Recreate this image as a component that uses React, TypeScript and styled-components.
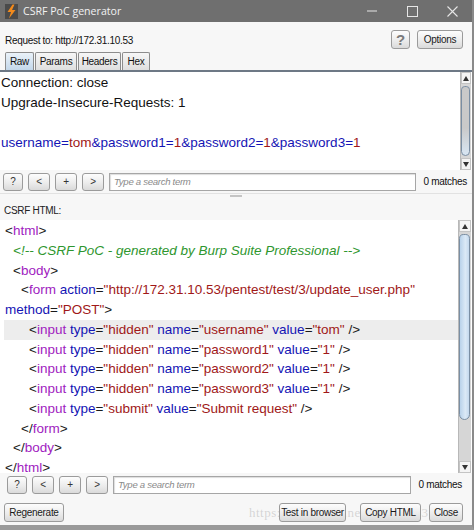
import React from 'react';
import styled, { createGlobalStyle } from 'styled-components';

const GlobalStyle = createGlobalStyle`
  html, body {
    margin: 0;
    padding: 0;
    background: #6f6f6f;
  }
  body {
    font-family: "Liberation Sans", Arial, sans-serif;
  }
`;

const Window = styled.div`
  position: relative;
  width: 474px;
  height: 530px;
  display: flex;
  flex-direction: column;
  background: #f7f7f7;
  border-right: 2px solid #8a8a8a;
  border-bottom: 5px solid #9a9a9a;
  box-sizing: border-box;
  overflow: hidden;
`;

const TitleBar = styled.div`
  height: 22px;
  flex: none;
  display: flex;
  align-items: center;
  background: #6f6f6f;
  color: #f2f2f2;
  font-family: "Open Sans", "Noto Sans", sans-serif;
  font-size: 10.6px;
  padding-left: 5px;
`;

const TitleText = styled.span`
  margin-left: 5px;
  flex: 1;
`;

const WinControls = styled.div`
  display: flex;
  align-items: center;
  height: 22px;
`;

const WinButton = styled.div<{ $w: number }>`
  width: ${({ $w }) => $w}px;
  height: 22px;
  display: flex;
  align-items: center;
  justify-content: center;
`;

const uiFont = `
  font-family: "Liberation Sans", Arial, sans-serif;
  font-size: 10px;
  letter-spacing: -0.3px;
`;

const HeaderRow = styled.div`
  height: 30px;
  flex: none;
  display: flex;
  align-items: center;
  padding: 0 9px 0 5px;
  ${uiFont}
  color: #111;
`;

const HeaderLabel = styled.span`
  flex: 1;
  padding-top: 7px;
`;

const Button = styled.button<{ $w?: number; $h?: number }>`
  position: relative;
  height: ${({ $h }) => $h ?? 19}px;
  ${({ $w }) => ($w ? `width: ${$w}px;` : '')}
  padding: 0 3px;
  border: 1px solid #9b9b9b;
  border-radius: 3px;
  background: linear-gradient(#fdfdfd, #ececec 55%, #dadada);
  ${uiFont}
  color: #1a1a1a;
  display: flex;
  align-items: center;
  justify-content: center;
  box-sizing: border-box;
  flex: none;
  white-space: nowrap;
`;

const HelpButton = styled(Button)`
  font-size: 15px;
  color: #7a7a7a;
  font-weight: bold;
  padding: 0;
`;

const HeaderButtons = styled.div`
  display: flex;
  gap: 7px;
  align-self: flex-start;
  margin-top: 8px;
`;

const Tabs = styled.div`
  height: 18px;
  flex: none;
  display: flex;
  align-items: flex-end;
  padding-left: 5px;
  gap: 1px;
  border-bottom: 2px solid #6d7885;
`;

const Tab = styled.div<{ $active?: boolean; $w: number }>`
  width: ${({ $w }) => $w}px;
  height: 18px;
  box-sizing: border-box;
  border: 1px solid #8c8c8c;
  border-bottom: none;
  border-radius: 2px 2px 0 0;
  background: ${({ $active }) =>
    $active ? 'linear-gradient(#eaf2f9, #c3d7ea)' : 'linear-gradient(#f7f7f7, #dedede)'};
  ${uiFont}
  color: #111;
  display: flex;
  align-items: center;
  justify-content: center;
`;

const EditorFrame = styled.div<{ $h: number }>`
  height: ${({ $h }) => $h}px;
  flex: none;
  display: flex;
  background: #fff;
  box-sizing: border-box;
  overflow: hidden;
`;

const EditorText = styled.div<{ $lh: number; $pad: number; $top: number }>`
  flex: 1;
  font-size: 13.5px;
  line-height: ${({ $lh }) => $lh}px;
  padding: ${({ $top }) => $top}px 0 0 ${({ $pad }) => $pad}px;
  white-space: pre;
  color: #111;
  overflow: hidden;
`;

const Line = styled.div<{ $hl?: boolean; $indent?: number }>`
  padding-left: ${({ $indent }) => ($indent ?? 0) * 8 + 1}px;
  background: ${({ $hl }) => ($hl ? '#ededed' : 'transparent')};
`;

const Bracket = styled.span`
  color: #1a1a1a;
`;
const TagName = styled.span`
  color: #a01cc0;
`;
const AttrName = styled.span`
  color: #1414b4;
`;
const AttrValue = styled.span`
  color: #a01818;
`;
const Comment = styled.span`
  color: #2e962e;
  font-style: italic;
`;

const ScrollBar = styled.div<{ $w: number }>`
  width: ${({ $w }) => $w}px;
  flex: none;
  display: flex;
  flex-direction: column;
  background: #d6d6d6;
  border-left: 1px solid #b8b8b8;
  margin-right: 1px;
`;

const ScrollArrow = styled.div`
  height: 12px;
  flex: none;
  background: #f4f4f4;
  border: 1px solid #c4c4c4;
  box-sizing: border-box;
  display: flex;
  align-items: center;
  justify-content: center;
`;

const ScrollThumb = styled.div<{ $h: number; $color: string }>`
  height: ${({ $h }) => $h}px;
  flex: none;
  margin: 2px 1px 0 0;
  border-radius: 10px 10px 12px 12px;
  background: ${({ $color }) => $color};
  border: 1px solid #7a8ea3;
  box-sizing: border-box;
`;

const ScrollTrack = styled.div`
  flex: 1;
`;

const SearchRow = styled.div<{ $pl: number; $pr: number }>`
  height: 23px;
  flex: none;
  display: flex;
  align-items: center;
  padding: 0 ${({ $pr }) => $pr}px 0 ${({ $pl }) => $pl}px;
  gap: 5px;
`;

const SmallButton = styled(Button)`
  width: 22px;
  height: 18px;
  padding: 0;
  font-size: 10px;
  color: #333;
`;

const SearchInput = styled.div`
  flex: 1;
  height: 18px;
  box-sizing: border-box;
  border: 1px solid #a6a6a6;
  box-shadow: inset 1px 1px 1px #ddd;
  background: #fff;
  ${uiFont}
  font-size: 9.6px;
  font-style: italic;
  color: #8a8a8a;
  padding-left: 4px;
  display: flex;
  align-items: center;
`;

const Matches = styled.span`
  ${uiFont}
  color: #111;
  margin-left: 3px;
  white-space: nowrap;
`;

const Splitter = styled.div`
  height: 7px;
  flex: none;
  display: flex;
  justify-content: center;
  align-items: center;
  border-top: 1px solid #e2e2e2;
`;

const SplitHandle = styled.div`
  width: 12px;
  height: 2px;
  background: #c4c4c4;
  margin-top: -4px;
`;

const SectionLabel = styled.div`
  height: 19px;
  flex: none;
  ${uiFont}
  color: #222;
  padding-left: 4px;
  display: flex;
  align-items: center;
`;

const BottomBar = styled.div`
  flex: 1;
  display: flex;
  align-items: center;
  padding: 3px 9px 0 4px;
`;

const BottomRight = styled.div`
  margin-left: auto;
  display: flex;
  align-items: center;
`;

const Watermark = styled.span`
  position: absolute;
  left: 249px;
  top: 505px;
  font-family: "Liberation Serif", serif;
  font-size: 13px;
  color: rgba(170, 170, 170, 0.45);
  letter-spacing: 0.5px;
  pointer-events: none;
  white-space: nowrap;
`;

const UpArrow = () => (
  <svg width="6" height="5" viewBox="0 0 6 5">
    <path d="M0 5 L3 0 L6 5 Z" fill="#333" />
  </svg>
);

const DownArrow = () => (
  <svg width="6" height="5" viewBox="0 0 6 5">
    <path d="M0 0 L3 5 L6 0 Z" fill="#333" />
  </svg>
);

const BurpIcon = () => (
  <svg width="13" height="15" viewBox="0 0 13 15">
    <rect x="0" y="0" width="13" height="15" fill="#4a4a4a" />
    <path d="M7.5 0.5 L2.5 8 L6 8 L4 14.5 L10.5 6 L7 6 L9.5 0.5 Z" fill="#f28a1c" />
  </svg>
);

const Tag: React.FC<{ close?: boolean; name: string; children?: React.ReactNode }> = ({
  close,
  name,
  children,
}) => (
  <>
    <Bracket>{close ? '</' : '<'}</Bracket>
    <TagName>{name}</TagName>
    {children}
    <Bracket>{children && !close ? ' />' : '>'}</Bracket>
  </>
);

const Attr: React.FC<{ name: string; value: string }> = ({ name, value }) => (
  <>
    {' '}
    <AttrName>{name}</AttrName>
    <Bracket>=</Bracket>
    <AttrValue>"{value}"</AttrValue>
  </>
);

const hiddenInputs = [
  ['username', 'tom'],
  ['password1', '1'],
  ['password2', '1'],
  ['password3', '1'],
];

const Search: React.FC<{ pl: number; pr: number }> = ({ pl, pr }) => (
  <SearchRow $pl={pl} $pr={pr}>
    <SmallButton style={{ width: 20 }}>?</SmallButton>
    <SmallButton>&lt;</SmallButton>
    <SmallButton>+</SmallButton>
    <SmallButton>&gt;</SmallButton>
    <SearchInput>Type a search term</SearchInput>
    <Matches>0 matches</Matches>
  </SearchRow>
);

const App: React.FC = () => {
  return (
    <>
      <GlobalStyle />
      <Window>
        <TitleBar>
          <BurpIcon />
          <TitleText>CSRF PoC generator</TitleText>
          <WinControls>
            <WinButton $w={40}>
              <svg width="10" height="2">
                <rect width="10" height="1" y="0.5" fill="#e6e6e6" />
              </svg>
            </WinButton>
            <WinButton $w={40}>
              <svg width="11" height="11">
                <rect x="0.5" y="0.5" width="10" height="10" fill="none" stroke="#e6e6e6" />
              </svg>
            </WinButton>
            <WinButton $w={40}>
              <svg width="11" height="11">
                <path d="M0.5 0.5 L10.5 10.5 M10.5 0.5 L0.5 10.5" stroke="#e6e6e6" strokeWidth="1.1" />
              </svg>
            </WinButton>
          </WinControls>
        </TitleBar>

        <HeaderRow>
          <HeaderLabel>Request to: http://172.31.10.53</HeaderLabel>
          <HeaderButtons>
            <HelpButton $w={19}>?</HelpButton>
            <Button $w={46}>Options</Button>
          </HeaderButtons>
        </HeaderRow>

        <Tabs>
          <Tab $active $w={29}>Raw</Tab>
          <Tab $w={42}>Params</Tab>
          <Tab $w={43}>Headers</Tab>
          <Tab $w={28}>Hex</Tab>
        </Tabs>

        <EditorFrame $h={98}>
          <EditorText $lh={20} $pad={0} $top={1}>
            <Line>Connection: close</Line>
            <Line>Upgrade-Insecure-Requests: 1</Line>
            <Line> </Line>
            <Line>
              <AttrName>username=</AttrName>
              <AttrValue>tom</AttrValue>
              <AttrName>&amp;password1=</AttrName>
              <AttrValue>1</AttrValue>
              <AttrName>&amp;password2=</AttrName>
              <AttrValue>1</AttrValue>
              <AttrName>&amp;password3=</AttrName>
              <AttrValue>1</AttrValue>
            </Line>
          </EditorText>
          <ScrollBar $w={10}>
            <ScrollArrow>
              <UpArrow />
            </ScrollArrow>
            <ScrollThumb $h={70} $color="linear-gradient(#c9c9c9, #c9c9c9 60%, #d8e6f3)" />
            <ScrollTrack />
            <ScrollArrow>
              <DownArrow />
            </ScrollArrow>
          </ScrollBar>
        </EditorFrame>

        <Search pl={3} pr={5} />

        <Splitter>
          <SplitHandle />
        </Splitter>

        <SectionLabel>CSRF HTML:</SectionLabel>

        <EditorFrame $h={253}>
          <EditorText $lh={19.75} $pad={4} $top={1}>
            <Line>
              <Tag name="html" />
            </Line>
            <Line $indent={1}>
              <Comment>&lt;!-- CSRF PoC - generated by Burp Suite Professional --&gt;</Comment>
            </Line>
            <Line $indent={1}>
              <Tag name="body" />
            </Line>
            <Line $indent={2}>
              <Bracket>&lt;</Bracket>
              <TagName>form</TagName>
              <Attr name="action" value="http://172.31.10.53/pentest/test/3/update_user.php" />
            </Line>
            <Line>
              <AttrName>method</AttrName>
              <Bracket>=</Bracket>
              <AttrValue>"POST"</AttrValue>
              <Bracket>&gt;</Bracket>
            </Line>
            {hiddenInputs.map(([name, value], i) => (
              <Line key={name} $indent={3} $hl={i === 0}>
                <Tag name="input">
                  <Attr name="type" value="hidden" />
                  <Attr name="name" value={name} />
                  <Attr name="value" value={value} />
                </Tag>
              </Line>
            ))}
            <Line $indent={3}>
              <Tag name="input">
                <Attr name="type" value="submit" />
                <Attr name="value" value="Submit request" />
              </Tag>
            </Line>
            <Line $indent={2}>
              <Tag close name="form" />
            </Line>
            <Line $indent={1}>
              <Tag close name="body" />
            </Line>
            <Line>
              <Tag close name="html" />
            </Line>
          </EditorText>
          <ScrollBar $w={12}>
            <ScrollArrow>
              <UpArrow />
            </ScrollArrow>
            <ScrollThumb $h={186} $color="linear-gradient(90deg, #b9d2ea, #dbe9f6 60%, #c4d9ee)" />
            <ScrollTrack />
            <ScrollArrow>
              <DownArrow />
            </ScrollArrow>
          </ScrollBar>
        </EditorFrame>

        <Search pl={7} pr={10} />

        <Watermark>https://blog.csdn.net/weixin_43</Watermark>

        <BottomBar>
          <Button $w={60}>Regenerate</Button>
          <BottomRight>
            <Button $w={67}>Test in browser</Button>
            <Button $w={61} style={{ marginLeft: 14 }}>Copy HTML</Button>
            <Button $w={34} style={{ marginLeft: 8 }}>Close</Button>
          </BottomRight>
        </BottomBar>
      </Window>
    </>
  );
};

export default App;
